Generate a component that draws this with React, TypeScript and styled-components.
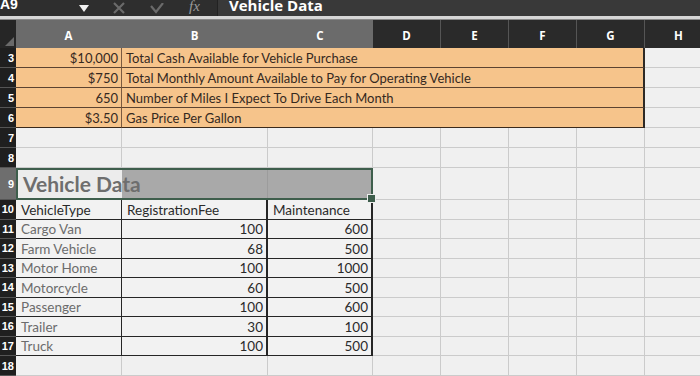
import React from 'react';
import styled, { createGlobalStyle } from 'styled-components';

const GlobalStyle = createGlobalStyle`
  html, body {
    margin: 0;
    padding: 0;
    background: #efefef;
    overflow: hidden;
  }
  body {
    font-family: Lato, "Open Sans", sans-serif;
  }
`

const Page = styled.div`
  width: 700px;
  height: 376px;
  overflow: hidden;
  background: #efefef;
`

const FormulaBar = styled.div`
  height: 16px;
  display: flex;
  align-items: flex-end;
  background: #2e2e2e;
  overflow: hidden;
  color: #fff;
`

const NameBox = styled.div`
  width: 72px;
  font: bold 14px "Liberation Sans", sans-serif;
  line-height: 14px;
  margin-bottom: 5px;
`

const BarIcon = styled.div<{ $w: number }>`
  width: ${p => p.$w}px;
  height: 16px;
  display: flex;
  align-items: center;
  justify-content: center;
`

const Fx = styled.div`
  width: 45px;
  font: italic 15px "Liberation Serif", serif;
  color: #9a9a9a;
  line-height: 14px;
  margin-bottom: 3px;
  text-align: center;
`

const FormulaInput = styled.div`
  flex: 1;
  align-self: stretch;
  background: #393939;
  border-left: 1px solid #222;
  padding-left: 11px;
  font: bold 15px "Open Sans", sans-serif;
  line-height: 14px;
  display: flex;
  align-items: flex-end;
  padding-bottom: 4px;
  box-sizing: border-box;
`

const Strip = styled.div`
  height: 4px;
  background: #d6d6d6;
  border-bottom: 1px solid #8a8a8a;
  box-sizing: border-box;
`

const Sheet = styled.div`
  display: grid;
  grid-template-columns: 16px 106px 146px 105px 68px 68px 68px 68px 68px;
  grid-template-rows: 28px repeat(6, 20px) 32px repeat(8, 19.5px) 20px;
`

const Corner = styled.div`
  background: #262626;
  position: relative;
  &::after {
    content: '';
    position: absolute;
    right: 2px;
    bottom: 2px;
    border-style: solid;
    border-width: 0 0 9px 9px;
    border-color: transparent transparent #6a6a6a transparent;
  }
`

const ColHead = styled.div<{ $selected?: boolean }>`
  background: ${p => (p.$selected ? '#6b6b6b' : '#2a2a2a')};
  border-right: 1px solid ${p => (p.$selected ? '#6b6b6b' : '#555')};
  color: #fff;
  font: bold 11.5px "Open Sans", sans-serif;
  display: flex;
  align-items: center;
  justify-content: center;
  padding-top: 2px;
  box-sizing: border-box;
`

const RowHead = styled.div<{ $selected?: boolean }>`
  background: ${p => (p.$selected ? '#6e6e6e' : '#1f1f1f')};
  border-bottom: 1px solid #555;
  color: #fff;
  font: bold 11px "Liberation Sans", sans-serif;
  display: flex;
  align-items: center;
  justify-content: flex-end;
  padding-right: 2px;
  box-sizing: border-box;
  overflow: hidden;
`

const Cell = styled.div`
  border-right: 1px solid #cbcbcb;
  border-bottom: 1px solid #cbcbcb;
  box-sizing: border-box;
  background: #f0f0f0;
`

const OrangeCell = styled.div<{ $span?: number; $right?: boolean; $last?: boolean }>`
  grid-column: span ${p => p.$span || 1};
  background: #f6c48b;
  color: #35291f;
  font-size: 13px;
  white-space: nowrap;
  display: flex;
  align-items: center;
  justify-content: ${p => (p.$right ? 'flex-end' : 'flex-start')};
  padding: 1px 3px 0 4px;
  border-bottom: 1px solid ${p => (p.$last ? '#3a2a1c' : '#5c4330')};
  border-right: ${p => (p.$right ? '1px solid #7a5a40' : '2px solid #2e2a26')};
  box-sizing: border-box;
`

const TitleCell = styled.div`
  grid-column: span 3;
  position: relative;
  display: grid;
  grid-template-columns: 104px 1fr;
  border: 2px solid #3e5e4c;
  box-sizing: border-box;
`

const TitleText = styled.div`
  position: relative;
  z-index: 1;
  background: #ececec;
  color: #6e6e6e;
  font-size: 21px;
  font-weight: bold;
  display: flex;
  align-items: flex-end;
  padding: 0 0 2px 5px;
  white-space: nowrap;
`

const TitleFill = styled.div`
  background: #a9a9a9;
  background-image: linear-gradient(to right, transparent 145px, #9c9c9c 145px, #9c9c9c 146px, transparent 146px);
`

const FillHandle = styled.span`
  position: absolute;
  right: -5px;
  bottom: -5px;
  z-index: 2;
  width: 7px;
  height: 7px;
  background: #3e5e4c;
  border: 1px solid #eee;
`

const TableCell = styled.div<{ $num?: boolean; $head?: boolean; $thick?: boolean }>`
  background: #f2f2f2;
  color: ${p => (p.$head || p.$num ? '#2a2a2a' : '#6c6c6c')};
  font-size: 13.5px;
  white-space: nowrap;
  display: flex;
  align-items: center;
  justify-content: ${p => (p.$num ? 'flex-end' : 'flex-start')};
  padding: 1px 3px 0 5px;
  border-right: ${p => (p.$thick ? '2px' : '1px')} solid #262626;
  border-bottom: 1px solid #262626;
  box-sizing: border-box;
`

const info = [
  ['$10,000', 'Total Cash Available for Vehicle Purchase'],
  ['$750', 'Total Monthly Amount Available to Pay for Operating Vehicle'],
  ['650', 'Number of Miles I Expect To Drive Each Month'],
  ['$3.50', 'Gas Price Per Gallon'],
];

const vehicles = [
  ['Cargo Van', 100, 600],
  ['Farm Vehicle', 68, 500],
  ['Motor Home', 100, 1000],
  ['Motorcycle', 60, 500],
  ['Passenger', 100, 600],
  ['Trailer', 30, 100],
  ['Truck', 100, 500],
];

const cols = ['A', 'B', 'C', 'D', 'E', 'F', 'G', 'H'];

function Blanks({ from }: { from: number }) {
  return (
    <>
      {cols.slice(from).map(c => (
        <Cell key={c} />
      ))}
    </>
  );
}

export default function App() {
  return (
    <Page>
      <GlobalStyle />
      <FormulaBar>
        <NameBox>A9</NameBox>
        <BarIcon $w={24}>
          <svg width="10" height="8" viewBox="0 0 10 8">
            <path d="M0 1 L10 1 L5 8 Z" fill="#f2f2f2" />
          </svg>
        </BarIcon>
        <BarIcon $w={46}>
          <svg width="12" height="12" viewBox="0 0 12 12">
            <path d="M1 1 L11 11 M11 1 L1 11" stroke="#6a6a6a" strokeWidth="2.2" />
          </svg>
        </BarIcon>
        <BarIcon $w={30}>
          <svg width="14" height="11" viewBox="0 0 14 11">
            <path d="M1 3 L6 9 L13 0" stroke="#6a6a6a" strokeWidth="2.2" fill="none" />
          </svg>
        </BarIcon>
        <Fx>fx</Fx>
        <FormulaInput>Vehicle Data</FormulaInput>
      </FormulaBar>
      <Strip />
      <Sheet>
        <Corner />
        {cols.map((c, i) => (
          <ColHead key={c} $selected={i < 3}>{c}</ColHead>
        ))}

        {info.map(([amount, label], i) => (
          <React.Fragment key={label}>
            <RowHead>{i + 3}</RowHead>
            <OrangeCell $right $last={i === 3}>{amount}</OrangeCell>
            <OrangeCell $span={6} $last={i === 3}>{label}</OrangeCell>
            <Cell />
          </React.Fragment>
        ))}

        <RowHead>7</RowHead>
        <Blanks from={0} />
        <RowHead>8</RowHead>
        <Blanks from={0} />

        <RowHead $selected>9</RowHead>
        <TitleCell>
          <TitleText>Vehicle Data</TitleText>
          <TitleFill />
          <FillHandle />
        </TitleCell>
        <Blanks from={3} />

        <RowHead>10</RowHead>
        <TableCell $head>VehicleType</TableCell>
        <TableCell $head $thick>RegistrationFee</TableCell>
        <TableCell $head $thick>Maintenance</TableCell>
        <Blanks from={3} />

        {vehicles.map(([name, fee, maint], i) => (
          <React.Fragment key={name}>
            <RowHead>{i + 11}</RowHead>
            <TableCell>{name}</TableCell>
            <TableCell $num $thick>{fee}</TableCell>
            <TableCell $num $thick>{maint}</TableCell>
            <Blanks from={3} />
          </React.Fragment>
        ))}

        <RowHead>18</RowHead>
        <Blanks from={0} />
      </Sheet>
    </Page>
  );
}
